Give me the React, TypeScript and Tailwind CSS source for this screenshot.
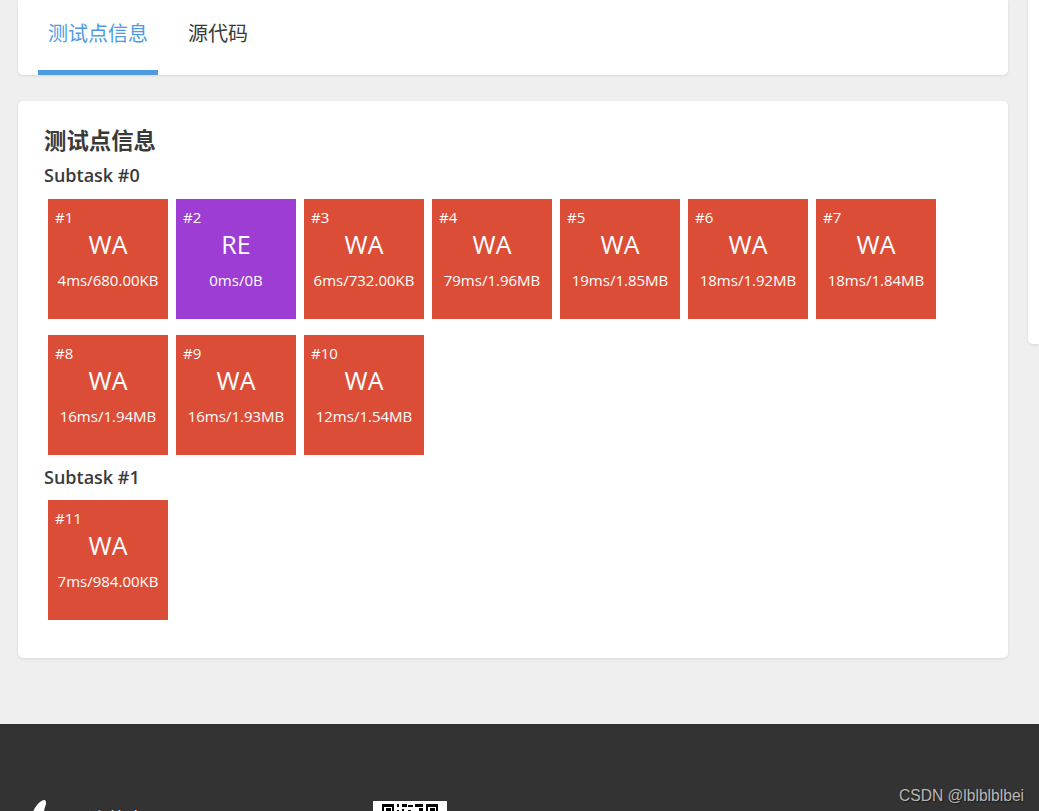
const tiles1 = [
  { id: 1, s: "WA", t: "4ms/680.00KB" },
  { id: 2, s: "RE", t: "0ms/0B" },
  { id: 3, s: "WA", t: "6ms/732.00KB" },
  { id: 4, s: "WA", t: "79ms/1.96MB" },
  { id: 5, s: "WA", t: "19ms/1.85MB" },
  { id: 6, s: "WA", t: "18ms/1.92MB" },
  { id: 7, s: "WA", t: "18ms/1.84MB" },
  { id: 8, s: "WA", t: "16ms/1.94MB" },
  { id: 9, s: "WA", t: "16ms/1.93MB" },
  { id: 10, s: "WA", t: "12ms/1.54MB" },
];

function Tile({ id, s, t }: { id: number; s: string; t: string }) {
  return (
    <div className={`relative h-[120px] w-[120px] text-white ${s === "RE" ? "bg-[#9d3dd3]" : "bg-[#dc4d38]"}`}>
      <div className="absolute left-[7px] top-[8px] text-[15px] leading-[20px]">#{id}</div>
      <div className="pt-[28px] text-center text-[25px] leading-[34px]">{s}</div>
      <div className="pt-[9px] text-center text-[15px] leading-[20px]">{t}</div>
    </div>
  );
}

export default function App() {
  return (
    <div className="relative flex h-[811px] w-[1039px] flex-col overflow-hidden bg-[#efefef] font-['Open_Sans','Noto_Sans_CJK_SC',sans-serif] text-[#3a3a3a]">
      <div className="flex items-start">
        <main className="ml-[18px] w-[990px]">
          <div className="flex h-[75px] rounded-b-[5px] bg-white pl-[20px] shadow-[0_1px_3px_rgba(0,0,0,0.1)]">
            <div className="flex h-[75px] w-[120px] justify-center border-b-[5px] border-[#4e9ae1] pt-[20px] text-[20px] leading-[28px] text-[#4e9ae1]">
              测试点信息
            </div>
            <div className="ml-[20px] flex h-[75px] w-[80px] justify-center pt-[20px] text-[20px] leading-[28px]">
              源代码
            </div>
          </div>
          <div className="mt-[26px] h-[557px] rounded-[5px] bg-white pl-[26px] pt-[24px] shadow-[0_1px_3px_rgba(0,0,0,0.1)]">
            <h2 className="text-[22.4px] font-bold leading-[32px]">测试点信息</h2>
            <h3 className="mt-[6px] text-[18px] font-semibold leading-[24px]">Subtask #0</h3>
            <div className="ml-[4px] mt-[12px] flex w-[900px] flex-wrap gap-x-[8px] gap-y-[16px]">
              {tiles1.map((x) => (
                <Tile key={x.id} {...x} />
              ))}
            </div>
            <h3 className="mt-[10px] text-[18px] font-semibold leading-[24px]">Subtask #1</h3>
            <div className="ml-[4px] mt-[11px] flex">
              <Tile id={11} s="WA" t="7ms/984.00KB" />
            </div>
          </div>
        </main>
        <aside className="ml-[20px] h-[344px] flex-1 rounded-bl-[5px] bg-white shadow-[0_1px_3px_rgba(0,0,0,0.1)]" />
      </div>
      <footer className="relative mt-[66px] flex-1 bg-[#333333]">
        <div className="flex items-start pt-[76px]">
          <svg viewBox="0 0 20 12" className="ml-[30px] h-[12px] w-[20px]">
            <path d="M3 12 C5 7 9 1 14 0 C16 0 16 2 16 4 C15 7 14 10 14 12 Z" fill="#ffffff" />
          </svg>
          <div className="ml-[323px] mt-px h-[40px] w-[74px] bg-white p-[3px]">
            <svg viewBox="0 0 68 12" className="h-[10px] w-[68px]" shapeRendering="crispEdges">
              <path d="M0 0h15v12h-3V3H3v9H0z M5 5h6v7H5z M53 0h15v12h-3V3h-9v9h-3z M58 5h6v7h-6z" fill="#000" />
              <path d="M18 0h3v4h-3z M24 0h6v3h-6z M18 7h3v5h-3z M24 6h3v6h-3z M32 1h5v3h-5z M31 7h4v5h-4z M40 0h9v3h-9z M45 5h4v7h-4z M38 8h4v4h-4z" fill="#000" />
            </svg>
          </div>
        </div>
        <div className="absolute left-[86px] top-[83px] text-[20px] leading-[28px] text-white">计蒜客</div>
      </footer>
      <div className="absolute left-[899px] top-[787px] font-['Liberation_Sans',sans-serif] text-[15.6px] leading-[18px] text-[#b8b8b8] [text-shadow:1px_1px_1px_#1a1a1a]">
        CSDN @lblblblbei
      </div>
    </div>
  );
}
